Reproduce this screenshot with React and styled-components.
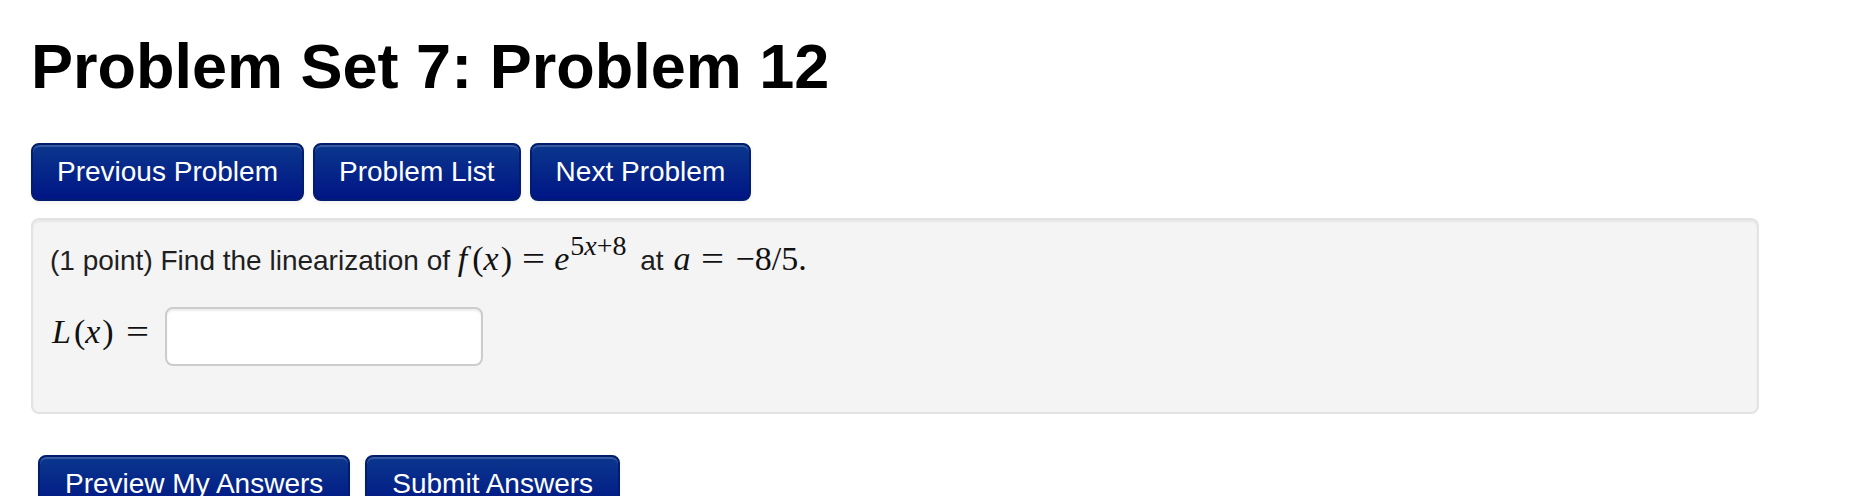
import React from "react";
import styled, { createGlobalStyle } from "styled-components";

const Global = createGlobalStyle`
  html, body { margin: 0; padding: 0; background: #fff; overflow: hidden; }
  body { font-family: "Liberation Sans", Arial, sans-serif; color: #1f1f1f; }
  * { box-sizing: border-box; }
`;

const Page = styled.div`
  padding: 35px 0 0 31px;
  width: 1759px;
`;

const Title = styled.h1`
  margin: 0;
  font-family: "Liberation Sans", Arial, sans-serif;
  font-weight: 700;
  font-size: 63px;
  line-height: 63px;
  color: #000;
`;

const ButtonRow = styled.div`
  display: flex;
  gap: ${(p) => p.$gap}px;
  margin-top: ${(p) => p.$top}px;
  padding-left: ${(p) => p.$indent || 0}px;
`;

const NavButton = styled.button`
  height: 58px;
  padding: 7px ${(p) => p.$pad || 24}px;
  border: 2px solid #021d6e;
  border-radius: 8px;
  background: linear-gradient(to bottom, #0b378d 0%, #001585 100%);
  box-shadow: inset 0 2px 0 rgba(255, 255, 255, 0.18), 0 2px 4px rgba(0, 0, 0, 0.06);
  color: #fff;
  font-family: "Liberation Sans", Arial, sans-serif;
  font-size: 28px;
  line-height: 40px;
  white-space: nowrap;
  cursor: pointer;
`;

const Well = styled.div`
  margin-top: 17px;
  width: 1728px;
  padding: 19px 17px 46px 17px;
  background: #f4f4f4;
  border: 2px solid #e3e3e3;
  border-radius: 8px;
  box-shadow: inset 0 2px 2px rgba(0, 0, 0, 0.05);
`;

const Statement = styled.div`
  font-size: 28px;
  line-height: 40px;
  white-space: nowrap;
  display: flex;
  align-items: baseline;
`;

const Math = styled.span`
  display: inline-flex;
  align-items: baseline;
  font-family: "Liberation Serif", "Times New Roman", serif;
  font-size: 34px;
  line-height: 40px;
  color: #111;
  margin-left: ${(p) => p.$ml || 0}px;
  margin-right: ${(p) => p.$mr || 0}px;
`;

const Var = styled.span`
  font-style: italic;
  margin-left: ${(p) => p.$ml || 0}px;
  margin-right: ${(p) => p.$mr || 0}px;
`;

const Op = styled.span`
  margin-left: ${(p) => p.$ml || 0}px;
  margin-right: ${(p) => p.$mr || 0}px;
  transform: scaleX(${(p) => p.$sx || 1});
  display: inline-block;
`;

const Sup = styled.span`
  display: inline-flex;
  align-items: baseline;
  font-size: 28px;
  line-height: 0;
  position: relative;
  top: -15px;
  margin-left: 1px;
`;

const Text = styled.span`
  white-space: pre;
`;

const AnswerRow = styled.div`
  display: flex;
  align-items: center;
  margin-top: 26px;
`;

const Label = styled(Math)`
  padding-bottom: 10px;
  margin-left: 2px;
`;

const AnswerInput = styled.input`
  margin-left: 18px;
  width: 318px;
  height: 59px;
  border: 2px solid #cccccc;
  border-radius: 8px;
  background: #fff;
  box-shadow: inset 0 2px 2px rgba(0, 0, 0, 0.075);
  font-family: "Liberation Sans", Arial, sans-serif;
  font-size: 28px;
  padding: 0 12px;
  outline: none;
`;

export default function App() {
  return (
    <>
      <Global />
      <Page>
        <Title>Problem Set 7: Problem 12</Title>
        <ButtonRow $gap={9} $top={45}>
          <NavButton>Previous Problem</NavButton>
          <NavButton>Problem List</NavButton>
          <NavButton>Next Problem</NavButton>
        </ButtonRow>
        <Well>
          <Statement>
            <Text>(1 point) Find the linearization of </Text>
            <Math $mr={6}>
              <Var $mr={5}>f</Var>
              <Op>(</Op>
              <Var $mr={2}>x</Var>
              <Op>)</Op>
              <Op $ml={12} $mr={11} $sx={1.2}>=</Op>
              <Var>e</Var>
              <Sup>
                <span>5</span>
                <Var>x</Var>
                <Op>+</Op>
                <span>8</span>
              </Sup>
            </Math>
            <Text> at </Text>
            <Math $ml={2}>
              <Var>a</Var>
              <Op $ml={13} $mr={13} $sx={1.2}>=</Op>
              <Op>−8/5.</Op>
            </Math>
          </Statement>
          <AnswerRow>
            <Label>
              <Var $mr={2}>L</Var>
              <Op $ml={1}>(</Op>
              <Var $mr={2}>x</Var>
              <Op>)</Op>
              <Op $ml={14} $sx={1.2}>=</Op>
            </Label>
            <AnswerInput type="text" aria-label="L(x)" />
          </AnswerRow>
        </Well>
        <ButtonRow $gap={15} $top={41} $indent={7}>
          <NavButton $pad={25}>Preview My Answers</NavButton>
          <NavButton $pad={25}>Submit Answers</NavButton>
        </ButtonRow>
      </Page>
    </>
  );
}
